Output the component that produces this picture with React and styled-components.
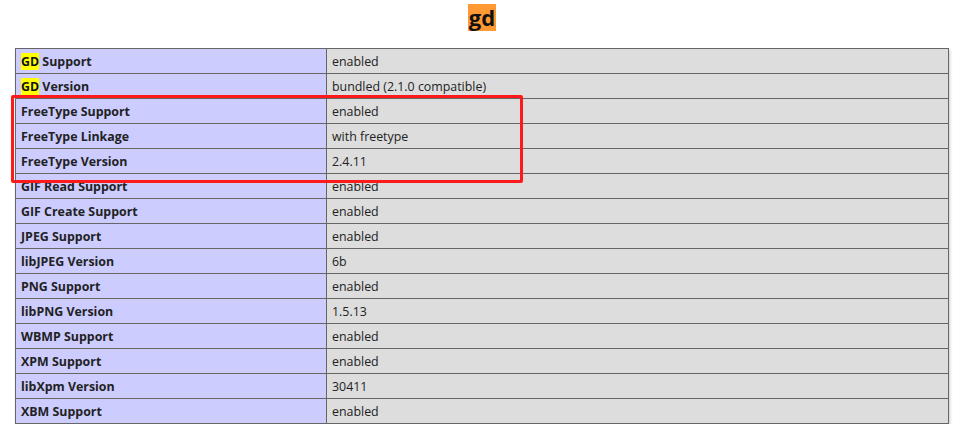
import React from 'react';
import styled, { createGlobalStyle } from 'styled-components';

const GlobalStyle = createGlobalStyle`
  html, body {
    margin: 0;
    padding: 0;
    background: #fff;
  }
  body {
    color: #222;
    font-family: "Open Sans", "Noto Sans", "Liberation Sans", sans-serif;
  }
`;

const Page = styled.div`
  position: relative;
  width: 964px;
  padding-top: 4px;
  text-align: center;
`;

const Title = styled.h2`
  margin: 0;
  display: inline-block;
  font-size: 22px;
  line-height: 27px;
  height: 27px;
  padding: 0 1px;
  font-weight: bold;
  color: #111;
  background: #fe9933;
`;

const Table = styled.table`
  border-collapse: collapse;
  border: 0;
  width: 934px;
  margin: 17px auto 0;
  text-align: left;
  box-shadow: 1px 2px 3px #ccc;
`;

const Cell = styled.td`
  border: 1px solid #666;
  font-size: 12.4px;
  line-height: 16px;
  padding: 5px 5px 3px;
  vertical-align: baseline;
  background: ${(p) => (p.$key ? '#ccf' : '#ddd')};
  font-weight: ${(p) => (p.$key ? 'bold' : 'normal')};
  width: ${(p) => (p.$key ? '300px' : 'auto')};
  color: #222;
`;

const Mark = styled.span`
  background: #ffff00;
  color: #111;
`;

const Highlight = styled.div`
  position: absolute;
  left: 11px;
  top: 95px;
  width: 506px;
  height: 82px;
  border: 3px solid #fe1a1a;
  border-radius: 2px;
  pointer-events: none;
`;

const rows = [
  [<><Mark>GD</Mark> Support</>, 'enabled'],
  [<><Mark>GD</Mark> Version</>, 'bundled (2.1.0 compatible)'],
  ['FreeType Support', 'enabled'],
  ['FreeType Linkage', 'with freetype'],
  ['FreeType Version', '2.4.11'],
  ['GIF Read Support', 'enabled'],
  ['GIF Create Support', 'enabled'],
  ['JPEG Support', 'enabled'],
  ['libJPEG Version', '6b'],
  ['PNG Support', 'enabled'],
  ['libPNG Version', '1.5.13'],
  ['WBMP Support', 'enabled'],
  ['XPM Support', 'enabled'],
  ['libXpm Version', '30411'],
  ['XBM Support', 'enabled'],
];

function App() {
  return (
    <Page>
      <GlobalStyle />
      <Title>gd</Title>
      <Table>
        <tbody>
          {rows.map(([name, value], i) => (
            <tr key={i}>
              <Cell $key>{name}</Cell>
              <Cell>{value}</Cell>
            </tr>
          ))}
        </tbody>
      </Table>
      <Highlight />
    </Page>
  );
}

export default App;
